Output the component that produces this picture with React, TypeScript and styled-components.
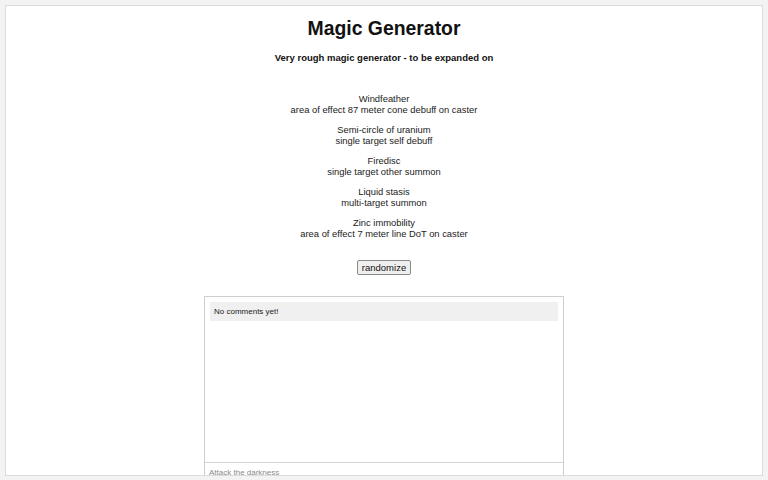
import React from "react";
import styled, { createGlobalStyle } from "styled-components";

const GlobalStyle = createGlobalStyle`
  html, body {
    margin: 0;
    padding: 0;
    background: #f3f3f3;
  }
  body {
    font-family: "Liberation Sans", Arial, sans-serif;
    color: #111;
  }
  * { box-sizing: border-box; }
`;

const Page = styled.div`
  padding: 5px;
  height: 480px;
  overflow: hidden;
`;

const Card = styled.main`
  background: #fff;
  border: 1px solid #dcdcdc;
  height: 471px;
  overflow: hidden;
  display: flex;
  flex-direction: column;
  align-items: center;
  padding-top: 11px;
`;

const Title = styled.h1`
  margin: 0;
  font-size: 19.4px;
  line-height: 22px;
  font-weight: bold;
  color: #111;
`;

const Subtitle = styled.h4`
  margin: 13px 0 0;
  font-size: 9.5px;
  line-height: 11px;
  font-weight: bold;
`;

const SpellList = styled.div`
  margin-top: 30px;
  display: flex;
  flex-direction: column;
  align-items: center;
  gap: 9px;
`;

const Spell = styled.p`
  margin: 0;
  font-size: 9.4px;
  line-height: 11px;
  text-align: center;
  color: #222;
`;

const RandomButton = styled.button`
  margin-top: 21px;
  font-family: "Liberation Sans", Arial, sans-serif;
  font-size: 9.5px;
  line-height: 11px;
  padding: 1px 4px;
  height: 15px;
  background: #efefef;
  color: #111;
  border: 1px solid #8a8a8a;
  border-radius: 2px;
`;

const CommentBox = styled.section`
  margin-top: 21px;
  width: 360px;
  flex-shrink: 0;
  border: 1px solid #cfcfcf;
  display: flex;
  flex-direction: column;
`;

const CommentList = styled.div`
  height: 165px;
  padding: 5px;
`;

const EmptyNote = styled.div`
  background: #f0f0f0;
  height: 19px;
  padding: 0 4px;
  display: flex;
  align-items: center;
  font-size: 8px;
  color: #222;
`;

const CommentInput = styled.input`
  border: none;
  border-top: 1px solid #d4d4d4;
  padding: 3px 4px 5px;
  height: 22px;
  font-family: "Liberation Sans", Arial, sans-serif;
  font-size: 8px;
  outline: none;
  &::placeholder {
    color: #8a8a8a;
  }
`;

const spells = [
  ["Windfeather", "area of effect 87 meter cone debuff on caster"],
  ["Semi-circle of uranium", "single target self debuff"],
  ["Firedisc", "single target other summon"],
  ["Liquid stasis", "multi-target summon"],
  ["Zinc immobility", "area of effect 7 meter line DoT on caster"],
];

export default function App() {
  return (
    <>
      <GlobalStyle />
      <Page>
        <Card>
          <Title>Magic Generator</Title>
          <Subtitle>Very rough magic generator - to be expanded on</Subtitle>
          <SpellList>
            {spells.map(([name, effect]) => (
              <Spell key={name}>
                {name}
                <br />
                {effect}
              </Spell>
            ))}
          </SpellList>
          <RandomButton type="button">randomize</RandomButton>
          <CommentBox>
            <CommentList>
              <EmptyNote>No comments yet!</EmptyNote>
            </CommentList>
            <CommentInput placeholder="Attack the darkness" />
          </CommentBox>
        </Card>
      </Page>
    </>
  );
}
